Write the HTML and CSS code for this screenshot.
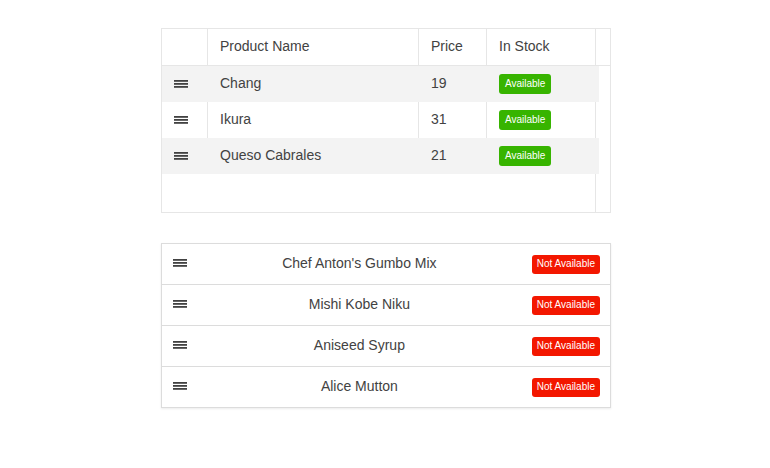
FILE: index.html
```html
<!DOCTYPE html>
<html>
<head>
<meta charset="utf-8">
<link rel="stylesheet" href="styles.css">
</head>
<body>
<div class="page">
  <div class="grid">
    <div class="grid-header">
      <div class="cell c-handle"></div>
      <div class="cell c-name">Product Name</div>
      <div class="cell c-price">Price</div>
      <div class="cell c-stock">In Stock</div>
      <div class="cell c-scroll"></div>
    </div>
    <div class="grid-body">
      <div class="grid-rows">
        <div class="row alt">
          <div class="cell c-handle"><svg class="handle" width="14" height="8" viewBox="0 0 14 8"><rect x="0" y="0" width="14" height="1.8"/><rect x="0" y="3" width="14" height="1.8"/><rect x="0" y="6" width="14" height="1.8"/></svg></div>
          <div class="cell c-name">Chang</div>
          <div class="cell c-price">19</div>
          <div class="cell c-stock"><span class="badge ok">Available</span></div>
        </div>
        <div class="row">
          <div class="cell c-handle"><svg class="handle" width="14" height="8" viewBox="0 0 14 8"><rect x="0" y="0" width="14" height="1.8"/><rect x="0" y="3" width="14" height="1.8"/><rect x="0" y="6" width="14" height="1.8"/></svg></div>
          <div class="cell c-name">Ikura</div>
          <div class="cell c-price">31</div>
          <div class="cell c-stock"><span class="badge ok">Available</span></div>
        </div>
        <div class="row alt">
          <div class="cell c-handle"><svg class="handle" width="14" height="8" viewBox="0 0 14 8"><rect x="0" y="0" width="14" height="1.8"/><rect x="0" y="3" width="14" height="1.8"/><rect x="0" y="6" width="14" height="1.8"/></svg></div>
          <div class="cell c-name">Queso Cabrales</div>
          <div class="cell c-price">21</div>
          <div class="cell c-stock"><span class="badge ok">Available</span></div>
        </div>
        <div class="filler"></div>
      </div>
      <div class="scrollbar"></div>
    </div>
  </div>

  <div class="list">
    <div class="item">
      <svg class="handle" width="14" height="8" viewBox="0 0 14 8"><rect x="0" y="0" width="14" height="1.8"/><rect x="0" y="3" width="14" height="1.8"/><rect x="0" y="6" width="14" height="1.8"/></svg>
      <span class="item-name">Chef Anton's Gumbo Mix</span>
      <span class="badge bad">Not Available</span>
    </div>
    <div class="item">
      <svg class="handle" width="14" height="8" viewBox="0 0 14 8"><rect x="0" y="0" width="14" height="1.8"/><rect x="0" y="3" width="14" height="1.8"/><rect x="0" y="6" width="14" height="1.8"/></svg>
      <span class="item-name">Mishi Kobe Niku</span>
      <span class="badge bad">Not Available</span>
    </div>
    <div class="item">
      <svg class="handle" width="14" height="8" viewBox="0 0 14 8"><rect x="0" y="0" width="14" height="1.8"/><rect x="0" y="3" width="14" height="1.8"/><rect x="0" y="6" width="14" height="1.8"/></svg>
      <span class="item-name">Aniseed Syrup</span>
      <span class="badge bad">Not Available</span>
    </div>
    <div class="item">
      <svg class="handle" width="14" height="8" viewBox="0 0 14 8"><rect x="0" y="0" width="14" height="1.8"/><rect x="0" y="3" width="14" height="1.8"/><rect x="0" y="6" width="14" height="1.8"/></svg>
      <span class="item-name">Alice Mutton</span>
      <span class="badge bad">Not Available</span>
    </div>
  </div>
</div>
</body>
</html>
```

FILE: styles.css
```css
html, body {
  margin: 0;
  padding: 0;
  background: #ffffff;
}

body {
  font-family: "Liberation Sans", Arial, Helvetica, sans-serif;
  font-size: 14px;
  color: #424242;
  width: 770px;
  height: 468px;
  overflow: hidden;
}

.page {
  padding-top: 28px;
  padding-left: 161px;
  display: flex;
  flex-direction: column;
  gap: 30px;
}

/* ---------- Grid ---------- */
.grid {
  width: 448px;
  border: 1px solid #e6e6e6;
  background: #fff;
}

.grid-header {
  display: flex;
  height: 36px;
  border-bottom: 1px solid #e6e6e6;
}

.cell {
  box-sizing: border-box;
  padding: 0 12px 2px;
  display: flex;
  align-items: center;
  white-space: nowrap;
}

.c-handle { width: 46px; border-right: 1px solid #e6e6e6; padding-bottom: 0; }
.c-name   { width: 211px; border-right: 1px solid #e6e6e6; }
.c-price  { width: 68px; border-right: 1px solid #e6e6e6; }
.c-stock  { width: 109px; border-right: 1px solid #e6e6e6; }
.c-scroll { width: 14px; padding: 0; }

.row .c-stock { padding-bottom: 0; }

.grid-body {
  display: flex;
  height: 146px;
}

.grid-rows {
  width: 434px;
  display: flex;
  flex-direction: column;
}

.row {
  display: flex;
  height: 36px;
  flex: none;
}

.row.alt {
  background: #f3f3f3;
  width: 437px;
}

.row.alt .cell {
  border-right-color: transparent;
}

.filler {
  flex: 1;
  border-right: 1px solid #e6e6e6;
}

.scrollbar {
  width: 14px;
  flex: none;
}

.handle {
  display: block;
  fill: #424242;
  flex: none;
}

/* ---------- Badges ---------- */
.badge {
  display: inline-flex;
  align-items: center;
  box-sizing: border-box;
  height: 20px;
  padding: 0 6px;
  border-radius: 3px;
  font-size: 10px;
  color: #fff;
  line-height: 1;
}

.badge.ok {
  background: #37b400;
}

.badge.bad {
  background: #f31700;
  height: 19px;
  padding: 0 5px;
}

/* ---------- List ---------- */
.list {
  width: 448px;
  border: 1px solid #dcdcdc;
  box-shadow: 0 1px 2px rgba(0, 0, 0, 0.08);
  background: #fff;
}

.item {
  display: flex;
  align-items: center;
  height: 40px;
  padding: 0 10px 0 11px;
  border-bottom: 1px solid #dcdcdc;
}

.item:last-child {
  border-bottom: none;
}

.item .handle {
  margin-top: -3px;
}

.item-name {
  flex: 1;
  text-align: center;
  padding-bottom: 2px;
}
```
